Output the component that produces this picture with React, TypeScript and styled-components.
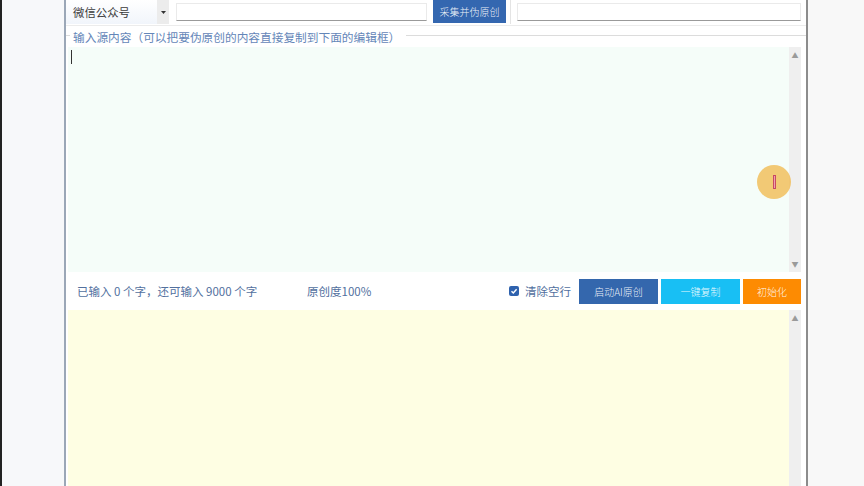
import React from "react";
import styled, { createGlobalStyle } from "styled-components";

const Global = createGlobalStyle`
  html, body { margin: 0; padding: 0; background: #f8f9fb; }
  body { font-family: "Noto Sans CJK SC", "Noto Sans", sans-serif; }
  * { box-sizing: border-box; }
`;

const Page = styled.div`
  display: flex;
  width: 864px;
  height: 486px;
  overflow: hidden;
`;

const LeftGutter = styled.div`
  width: 64px;
  flex: none;
  background: #f7f8fa;
  border-left: 2px solid #222;
`;

const RightGutter = styled.div`
  flex: 1;
  background: #f8f8f8;
`;

const Window = styled.div`
  position: relative;
  width: 744px;
  flex: none;
  background: #fff;
  border-left: 2px solid #9ba7b7;
  border-right: 2px solid #8c8c8c;
  display: flex;
  flex-direction: column;
`;

const Toolbar = styled.div`
  height: 26px;
  flex: none;
  display: flex;
  align-items: flex-start;
  padding-right: 5px;
  border-bottom: 1px solid #ececec;
`;

const Select = styled.div`
  width: 103px;
  height: 24px;
  display: flex;
  background: linear-gradient(#ffffff, #f1f5fb);
`;

const SelectText = styled.div`
  flex: 1;
  padding-left: 7px;
  font-size: 11.4px;
  line-height: 24px;
  color: #3a3a3a;
`;

const SelectArrow = styled.div`
  width: 12px;
  background: #ececec;
  display: flex;
  align-items: center;
  justify-content: center;
`;

const TextInput = styled.div<{ $w: number; $ml: number }>`
  width: ${(p) => p.$w}px;
  margin-left: ${(p) => p.$ml}px;
  margin-top: 3px;
  height: 18px;
  background: #fff;
  border: 1px solid #eaeaea;
  border-bottom: 1px solid #9a9a9a;
`;

const Button = styled.div<{ $w: number; $bg: string; $h?: number }>`
  width: ${(p) => p.$w}px;
  height: ${(p) => p.$h ?? 23}px;
  background: ${(p) => p.$bg};
  color: rgba(255, 255, 255, 0.92);
  font-size: 10px;
  font-weight: 300;
  display: flex;
  align-items: center;
  justify-content: center;
  flex: none;
`;

const ButtonSlot = styled.div`
  margin-left: 6px;
`;

const VDivider = styled.div`
  width: 1px;
  height: 24px;
  margin-left: 4px;
  background: #e4e4e4;
`;

const Legend = styled.div`
  height: 21px;
  flex: none;
  display: flex;
  align-items: center;
  padding-top: 1px;
`;

const LegendLine = styled.div<{ $w?: number }>`
  height: 1px;
  background: #dcdcdc;
  ${(p) => (p.$w ? `width: ${p.$w}px;` : "flex: 1;")}
  margin-top: -4px;
`;

const LegendText = styled.div`
  font-size: 11.7px;
  color: #6486b8;
  padding: 0 6px 0 3px;
  margin-top: -2px;
`;

const Editor = styled.div<{ $h: number; $bg: string }>`
  height: ${(p) => p.$h}px;
  flex: none;
  margin: 0 5px 0 2px;
  display: flex;
  background: ${(p) => p.$bg};
`;

const EditArea = styled.div`
  flex: 1;
  position: relative;
  padding: 3px 3px;
`;

const Caret = styled.div`
  width: 1px;
  height: 14px;
  background: #333;
`;

const Scrollbar = styled.div`
  width: 12px;
  background: #efefef;
  display: flex;
  flex-direction: column;
  justify-content: space-between;
  align-items: center;
  padding: 4px 0;
  font-size: 7px;
  color: #9a9a9a;
  line-height: 8px;
`;

const StatusRow = styled.div`
  height: 38px;
  flex: none;
  display: flex;
  align-items: center;
  padding: 0 5px 0 11px;
`;

const StatusText = styled.div<{ $w?: number }>`
  font-size: 11.5px;
  color: #52709e;
  ${(p) => (p.$w ? `width: ${p.$w}px;` : "")}
`;

const Spacer = styled.div`
  flex: 1;
`;

const CheckBox = styled.div`
  width: 10px;
  height: 10px;
  border-radius: 2px;
  background: #2f62ae;
  display: flex;
  align-items: center;
  justify-content: center;
`;

const CheckLabel = styled.div`
  font-size: 11.5px;
  color: #52709e;
  margin: 0 8px 0 6px;
`;

const ButtonGroup = styled.div`
  display: flex;
  gap: 3px;
`;

const Pointer = styled.div`
  position: absolute;
  left: 691px;
  top: 165px;
  width: 34px;
  height: 34px;
  border-radius: 50%;
  background: rgba(240, 183, 72, 0.75);
  display: flex;
  align-items: center;
  justify-content: center;
`;

const IBeam = styled.div`
  width: 3px;
  height: 14px;
  border: 1px solid #c84a62;
  background: #f0a0b0;
`;

export default function App() {
  return (
    <>
      <Global />
      <Page>
        <LeftGutter />
        <Window>
          <Toolbar>
            <Select>
              <SelectText>微信公众号</SelectText>
              <SelectArrow>
                <svg width="5" height="3" viewBox="0 0 5 3">
                  <path d="M0 0 H5 L2.5 3 Z" fill="#333" />
                </svg>
              </SelectArrow>
            </Select>
            <TextInput $w={251} $ml={7} />
            <ButtonSlot>
              <Button $w={73} $bg="#3467b0">采集并伪原创</Button>
            </ButtonSlot>
            <VDivider />
            <TextInput $w={284} $ml={6} />
          </Toolbar>
          <Legend>
            <LegendLine $w={4} />
            <LegendText>输入源内容（可以把要伪原创的内容直接复制到下面的编辑框）</LegendText>
            <LegendLine />
          </Legend>
          <Editor $h={225} $bg="#f5fdf9">
            <EditArea>
              <Caret />
            </EditArea>
            <Scrollbar>
              <span>▲</span>
              <span>▼</span>
            </Scrollbar>
          </Editor>
          <StatusRow>
            <StatusText $w={230}>已输入 0 个字，还可输入 9000 个字</StatusText>
            <StatusText>原创度100%</StatusText>
            <Spacer />
            <CheckBox>
              <svg width="8" height="8" viewBox="0 0 8 8">
                <path d="M1.5 4.2 L3.3 6 L6.6 2.2" stroke="#fff" strokeWidth="1.4" fill="none" />
              </svg>
            </CheckBox>
            <CheckLabel>清除空行</CheckLabel>
            <ButtonGroup>
              <Button $w={79} $h={25} $bg="#3467ad">启动AI原创</Button>
              <Button $w={79} $h={25} $bg="#18bff4">一键复制</Button>
              <Button $w={58} $h={25} $bg="#fd8b02">初始化</Button>
            </ButtonGroup>
          </StatusRow>
          <Editor $h={180} $bg="#fefee3">
            <EditArea />
            <Scrollbar>
              <span>▲</span>
              <span />
            </Scrollbar>
          </Editor>
          <Pointer>
            <IBeam />
          </Pointer>
        </Window>
        <RightGutter />
      </Page>
    </>
  );
}
